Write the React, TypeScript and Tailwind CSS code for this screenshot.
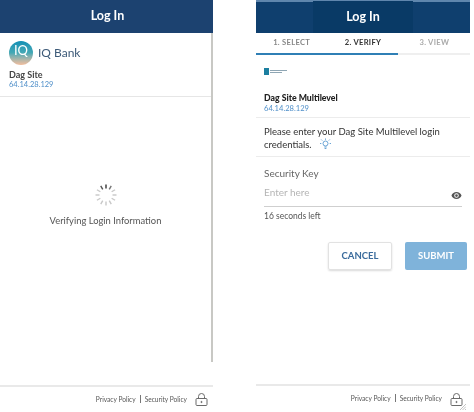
const font = "font-['Lato','Liberation_Sans',sans-serif]";

function Lock() {
  return (
    <svg width="13" height="13" viewBox="0 0 13 13" fill="none" stroke="#6b6b6b" strokeWidth="1">
      <rect x="1" y="5.5" width="11" height="7" rx="1" />
      <path d="M3.5 5.5V3.5a3 3 0 0 1 6 0v2" />
      <circle cx="6.5" cy="9" r="0.6" fill="#6b6b6b" />
    </svg>
  );
}

function Footer({ pr }: { pr: string }) {
  return (
    <div className={`h-[28px] border-t-2 border-[#e9e9e9] flex items-center justify-end text-[6.6px] text-[#555] ${pr}`}>
      <span>Privacy Policy</span>
      <span className="w-px h-[8px] bg-[#777] mx-[4px] -mt-[2px]" />
      <span className="mr-[8px]">Security Policy</span>
      <Lock />
    </div>
  );
}

function Spinner() {
  const ticks = Array.from({ length: 12 }, (_, i) => i);
  return (
    <svg width="22" height="22" viewBox="0 0 22 22">
      {ticks.map((i) => {
        const a = (i * 30 * Math.PI) / 180;
        const dark = i >= 8 && i <= 10;
        return (
          <line
            key={i}
            x1={11 + Math.cos(a) * 6.5}
            y1={11 + Math.sin(a) * 6.5}
            x2={11 + Math.cos(a) * 10.5}
            y2={11 + Math.sin(a) * 10.5}
            stroke={i === 9 ? "#333" : i === 8 ? "#555" : dark ? "#777" : "#c8c8c8"}
            strokeWidth="1.4"
          />
        );
      })}
    </svg>
  );
}

function BankLogo() {
  return (
    <div className="w-6 h-6 rounded-full bg-gradient-to-b from-[#0c8fb5] via-[#45a9b5] to-[#f2bd9c] flex flex-col items-center text-white shrink-0">
      <span className="text-[13px] leading-[13px] mt-[3px]">IQ</span>
    </div>
  );
}

export default function App() {
  return (
    <div className={`w-[474px] h-[412px] bg-white flex overflow-hidden blur-[0.3px] ${font}`}>
      {/* Left panel */}
      <div className="w-[213px] h-full flex flex-col">
        <div className="h-[33px] bg-[#1c4270] flex items-center justify-center text-white text-[12.5px] font-bold shrink-0 pl-[2px]">
          Log In
        </div>
        <div className="h-[352px] flex border-r-2 border-[#c8c8c4] shrink-0 [clip-path:inset(0_0_23px_0)]">
          <div className="flex-1 flex flex-col">
            <div className="h-[64px] border-b border-[#e6e6e6] px-[9px] pt-[8px] shrink-0">
              <div className="flex items-center gap-[5px]">
                <BankLogo />
                <span className="text-[12px] text-[#3d5a78]">IQ Bank</span>
              </div>
              <div className="text-[9px] leading-[10px] text-[#444] font-bold mt-[5px]">Dag Site</div>
              <div className="text-[7.5px] leading-[10px] text-[#4f8fc9]">64.14.28.129</div>
            </div>
            <div className="flex flex-col items-center pt-[87px]">
              <Spinner />
              <div className="text-[9.4px] text-[#555] mt-[8px]">Verifying Login Information</div>
            </div>
          </div>
        </div>
        <Footer pr="pr-[5px]" />
      </div>

      {/* Right panel */}
      <div className="w-[214px] ml-[43px] h-full flex flex-col relative">
        <div className="h-[33px] bg-[#0f3f6e] border-t-2 border-[#5f86ad] flex justify-center shrink-0">
          <div className="w-[100px] bg-[#093a66] flex items-center justify-center text-white text-[12.5px] font-bold -mt-[1px]">
            Log In
          </div>
        </div>
        <div className="h-[22px] flex border-b-2 border-[#efefef] relative text-[7.6px] font-bold tracking-[0.3px] shrink-0">
          <div className="flex-1 flex items-center justify-center text-[#888]">1. SELECT</div>
          <div className="flex-1 flex items-center justify-center text-[#333]">2. VERIFY</div>
          <div className="flex-1 flex items-center justify-center text-[#aaa]">3. VIEW</div>
          <div className="absolute left-0 bottom-[-2px] w-[142px] h-[2px] bg-[#2f7fb5]" />
        </div>
        <div className="px-[8px] h-[63px] pt-[12px] border-b border-[#ececec] shrink-0">
          <div className="flex items-center gap-[1px] h-[8px]">
            <div className="w-[5px] h-[7px] bg-[#1c7fa0]" />
            <div className="flex flex-col gap-[1px]">
              <div className="w-[17px] h-[1px] bg-[#8fa6b4]" />
              <div className="w-[12px] h-[1px] bg-[#8fa6b4]" />
            </div>
          </div>
          <div className="text-[8.7px] leading-[11px] font-black text-[#222] mt-[17px]">Dag Site Multilevel</div>
          <div className="text-[7.6px] leading-[10px] text-[#4f8fc9]">64.14.28.129</div>
        </div>
        <div className="h-[39px] px-[8px] pt-[8px] border-b border-[#ececec] text-[9.5px] leading-[12px] text-[#333] shrink-0">
          Please enter your Dag Site Multilevel login
          <div className="flex items-center gap-[8px]">
            credentials.
            <svg width="11" height="13" viewBox="0 0 11 13" fill="none" stroke="#5a9bd0" strokeWidth="0.9">
              <circle cx="5.500" cy="5.500" r="2.500" />
              <path d="M4.300 9h2.400M4.600 10.500h1.800M5.500 0.500v1.300M1.200 1.500l1 1M9.800 1.500l-1 1M0 5.500h1.300M11 5.500H9.700" />
            </svg>
          </div>
        </div>
        <div className="px-[8px] pt-[10px] shrink-0">
          <div className="text-[10px] leading-[13px] text-[#666]">Security Key</div>
          <div className="h-[27px] border-b border-[#cfcfcf] flex items-center justify-between w-[198px]">
            <span className="text-[10px] text-[#b5b5b5] -mt-[1px]">Enter here</span>
            <svg width="11" height="11" viewBox="0 0 24 24" fill="#555" className="mt-[4px]">
              <path d="M12 4.500C7 4.500 2.700 7.600 1 12c1.700 4.400 6 7.500 11 7.500s9.300-3.100 11-7.500c-1.700-4.400-6-7.500-11-7.500zm0 12.500a5 5 0 1 1 0-10 5 5 0 0 1 0 10zm0-8a3 3 0 1 0 0 6 3 3 0 0 0 0-6z" />
            </svg>
          </div>
          <div className="text-[8.5px] leading-[10px] text-[#555] mt-[4px]">16 seconds left</div>
        </div>
        <div className="flex justify-end gap-[13px] mt-[21px] pr-[3px] shrink-0">
          <div className="w-[64px] h-[28px] rounded-[2px] border border-[#e2e2e2] shadow-[0_1px_2px_rgba(0,0,0,0.15)] flex items-center justify-center text-[9.5px] font-bold text-[#3a6b9c]">
            CANCEL
          </div>
          <div className="w-[62px] h-[28px] rounded-[2px] bg-[#7fb3da] flex items-center justify-center text-[9.5px] font-bold text-white">
            SUBMIT
          </div>
        </div>
        <div className="flex-1" />
        <Footer pr="pr-[7px]" />
        <svg width="6" height="6" viewBox="0 0 6 6" stroke="#aaa" strokeWidth="0.7" className="absolute right-[4px] bottom-[2px]">
          <path d="M0 6L6 0M2.500 6L6 2.500M5 6L6 5" />
        </svg>
      </div>
    </div>
  );
}
